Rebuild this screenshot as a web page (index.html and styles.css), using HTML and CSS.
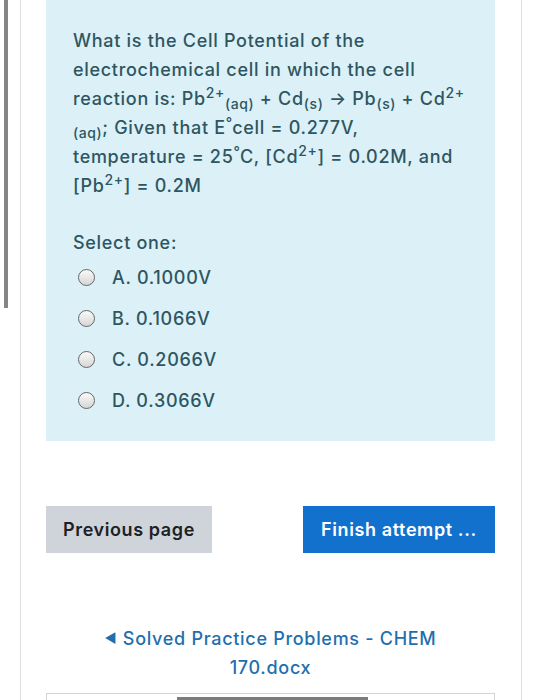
FILE: index.html
```html
<!DOCTYPE html>
<html>
    <head>
        <title>Quiz attempt</title>
        <meta charset="UTF-8">
        <meta name="viewport" content="width=device-width">
        <link rel="stylesheet" href="styles.css">
    </head>
    <body>
        <div class="rail"></div>
        <div class="card">
            <div class="formulation">
                <p class="qtext">
                    What is the Cell Potential of the electrochemical cell in which the cell reaction is: Pb<sup>2+</sup><sub>(aq)</sub> + Cd<sub>(s)</sub> &rarr; Pb<sub>(s)</sub> + Cd<sup>2+</sup> <sub>(aq)</sub>; Given that E<sup class="deg">&deg;</sup>cell = 0.277V,<br>
                    temperature = 25<sup class="deg">&deg;</sup>C, [Cd<sup>2+</sup>] = 0.02M, and [Pb<sup>2+</sup>] = 0.2M
                </p>
                <div class="prompt">Select one:</div>
                <ul class="answer">
                    <li><span class="radio"></span>A. 0.1000V</li>
                    <li><span class="radio"></span>B. 0.1066V</li>
                    <li><span class="radio"></span>C. 0.2066V</li>
                    <li><span class="radio"></span>D. 0.3066V</li>
                </ul>
            </div>

            <div class="submitbtns">
                <button class="btn btn-secondary">Previous page</button>
                <button class="btn btn-primary">Finish attempt ...</button>
            </div>

            <div class="prevlink">
                <a href="#"><span class="arrow">&#9664;</span> Solved Practice Problems - CHEM 170.docx</a>
            </div>

            <div class="jumpmenu">
                <div class="select"></div>
            </div>
        </div>
    </body>
</html>
```

FILE: styles.css
```css
html, body {
    margin: 0;
    padding: 0;
    background-color: #fff;
    font-family: Inter, "Noto Sans", sans-serif;
    color: #2e5661;
}
body {
    display: flex;
    align-items: flex-start;
    height: 700px;
    overflow: hidden;
}
.rail {
    width: 4px;
    height: 308px;
    margin-left: 4px;
    background-color: #858585;
}
.card {
    margin-left: 12px;
    width: 449px;
    min-height: 700px;
    padding: 0 26px 0 25px;
    border-left: 1px solid #dedede;
    border-right: 1px solid #dedede;
}
.formulation {
    background-color: #dcf0f7;
    height: 441px;
    box-sizing: border-box;
    padding: 26px 8px 0 27px;
    letter-spacing: 0.7px;
}
.qtext {
    margin: 0;
    font-size: 18px;
    line-height: 29px;
    font-weight: 500;
}
.qtext sup, .qtext sub {
    font-size: 14px;
    line-height: 0;
    letter-spacing: 0.6px;
}
.qtext sup {
    vertical-align: 7px;
}
.qtext sub {
    vertical-align: -4px;
}
.qtext .deg {
    font-size: 14px;
    vertical-align: 6px;
    letter-spacing: 0;
}
.prompt {
    margin-top: 28px;
    font-size: 18px;
    line-height: 29px;
    font-weight: 500;
}
.answer {
    margin: 0;
    padding: 0;
    list-style: none;
}
.answer li {
    display: flex;
    align-items: center;
    height: 41px;
    padding-left: 5px;
    font-size: 18px;
    font-weight: 500;
}
.radio {
    width: 15px;
    height: 15px;
    margin-right: 17px;
    border: 1.5px solid #666;
    border-radius: 50%;
    background: linear-gradient(#fafafa, #d6d6d6);
}
.submitbtns {
    display: flex;
    justify-content: space-between;
    margin-top: 65px;
}
.btn {
    height: 47px;
    padding: 0;
    border: 0;
    border-radius: 0;
    font-family: Inter, "Noto Sans", sans-serif;
    font-size: 18px;
    font-weight: 600;
    letter-spacing: 0.6px;
}
.btn-secondary {
    width: 166px;
    background-color: #ced4da;
    color: #1d2125;
}
.btn-primary {
    width: 192px;
    background-color: #1271cc;
    color: #fff;
}
.prevlink {
    margin: 71px auto 0;
    width: 380px;
    text-align: center;
    font-size: 18px;
    line-height: 29px;
    font-weight: 500;
    letter-spacing: 0.7px;
}
.prevlink a {
    color: #1f6fae;
    text-decoration: none;
}
.prevlink .arrow {
    font-size: 13px;
    vertical-align: 2px;
}
.jumpmenu {
    margin-top: 11px;
    height: 20px;
    border: 1px solid #d4d4d4;
    display: flex;
    justify-content: center;
    padding-left: 4px;
}
.select {
    margin-top: 3px;
    width: 191px;
    height: 10px;
    background-color: #7c7c7c;
}
```
